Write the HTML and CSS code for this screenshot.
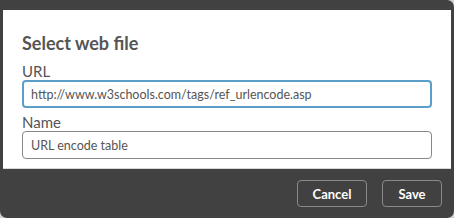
FILE: index.html
```html
<!DOCTYPE html>
<html lang="en">
<head>
  <meta charset="UTF-8">
  <title>Select web file</title>
  <link rel="stylesheet" href="styles.css">
</head>
<body>
  <div class="dialog">
    <div class="panel">
      <h2>Select web file</h2>
      <label class="label" for="url">URL</label>
      <input class="field active" id="url" type="text" value="http://www.w3schools.com/tags/ref_urlencode.asp">
      <label class="label" for="name">Name</label>
      <input class="field" id="name" type="text" value="URL encode table">
    </div>
    <div class="actions">
      <button class="btn cancel">Cancel</button>
      <button class="btn save">Save</button>
    </div>
  </div>
</body>
</html>
```

FILE: styles.css
```css
html, body {
  margin: 0;
  height: 100%;
  background: #d0d0d0;
}
body {
  font-family: Lato, "Open Sans", sans-serif;
}
.dialog {
  width: 454px;
  height: 218px;
  background: #414141;
  border-radius: 0 7px 7px 7px;
  box-sizing: border-box;
  padding-top: 10px;
  display: flex;
  flex-direction: column;
}
.panel {
  margin: 0 3px;
  background: #fff;
  height: 159px;
  box-sizing: border-box;
  border-bottom: 1px solid #d8d8d8;
  padding: 22px 19px 0 19px;
  display: flex;
  flex-direction: column;
}
h2 {
  margin: 0 0 9px 0;
  font-size: 18px;
  font-weight: bold;
  color: #555;
  line-height: 22px;
}
.label {
  font-size: 15px;
  color: #555;
  line-height: 17px;
}
.field {
  height: 28px;
  box-sizing: border-box;
  border: 1px solid #888;
  border-radius: 4px;
  padding: 0 8px;
  font-family: inherit;
  font-size: 12.5px;
  color: #555;
  margin-bottom: 5px;
  outline: none;
}
.field.active {
  border: 2px solid #5b9ec9;
  padding: 0 7px;
  margin-bottom: 6px;
}
.actions {
  flex: 1;
  display: flex;
  justify-content: flex-end;
  align-items: center;
  gap: 15px;
  padding: 0 12px 0 0;
}
.btn {
  height: 27px;
  padding: 0;
  background: transparent;
  border: 1px solid #8a8a8a;
  border-radius: 4px;
  color: #fff;
  font-family: inherit;
  font-weight: bold;
  font-size: 13px;
}
.cancel {
  width: 70px;
}
.save {
  width: 60px;
}
```
